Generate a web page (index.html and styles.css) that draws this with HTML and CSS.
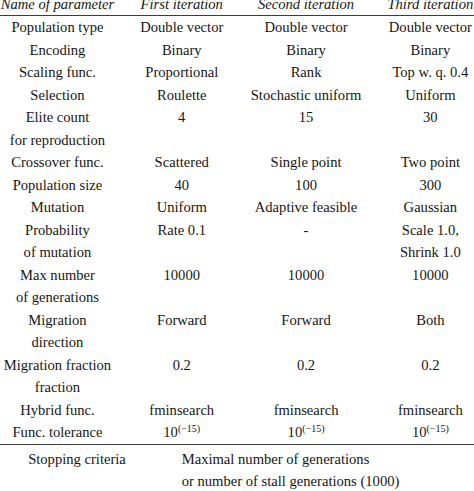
FILE: index.html
```html
<!DOCTYPE html>
<html>
<head>
<meta charset="utf-8">
<link rel="stylesheet" href="styles.css">
</head>
<body>
<div class="sheet">
  <table class="params">
    <colgroup>
      <col class="c"><col class="c"><col class="c"><col class="c">
    </colgroup>
    <thead>
      <tr>
        <th>Name of parameter</th>
        <th>First iteration</th>
        <th>Second iteration</th>
        <th>Third iteration</th>
      </tr>
    </thead>
    <tbody>
      <tr><td>Population type</td><td>Double vector</td><td>Double vector</td><td>Double vector</td></tr>
      <tr><td>Encoding</td><td>Binary</td><td>Binary</td><td>Binary</td></tr>
      <tr><td>Scaling func.</td><td>Proportional</td><td>Rank</td><td>Top w. q. 0.4</td></tr>
      <tr><td>Selection</td><td>Roulette</td><td>Stochastic uniform</td><td>Uniform</td></tr>
      <tr><td>Elite count<br>for reproduction</td><td>4</td><td>15</td><td>30</td></tr>
      <tr><td>Crossover func.</td><td>Scattered</td><td>Single point</td><td>Two point</td></tr>
      <tr><td>Population size</td><td>40</td><td>100</td><td>300</td></tr>
      <tr><td>Mutation</td><td>Uniform</td><td>Adaptive feasible</td><td>Gaussian</td></tr>
      <tr><td>Probability<br>of mutation</td><td>Rate 0.1</td><td>-</td><td>Scale 1.0,<br>Shrink 1.0</td></tr>
      <tr><td>Max number<br>of generations</td><td>10000</td><td>10000</td><td>10000</td></tr>
      <tr><td>Migration<br>direction</td><td>Forward</td><td>Forward</td><td>Both</td></tr>
      <tr><td>Migration fraction<br>fraction</td><td>0.2</td><td>0.2</td><td>0.2</td></tr>
      <tr><td>Hybrid func.</td><td>fminsearch</td><td>fminsearch</td><td>fminsearch</td></tr>
      <tr class="last"><td>Func. tolerance</td><td>10<sup>(−15)</sup></td><td>10<sup>(−15)</sup></td><td>10<sup>(−15)</sup></td></tr>
    </tbody>
  </table>
  <div class="stop">
    <div class="stop-label">Stopping criteria</div>
    <div class="stop-value">Maximal number of generations<br>or number of stall generations (1000)</div>
  </div>
</div>
</body>
</html>
```

FILE: styles.css
```css
html, body {
  margin: 0;
  padding: 0;
  overflow: hidden;
  background: #ffffff;
}

.sheet {
  margin-left: -4.7px;
  margin-top: -6px;
  width: 497.2px;
  font-family: "Liberation Serif", "Times New Roman", serif;
  font-size: 14.6px;
  color: #161616;
}

.params {
  border-collapse: collapse;
  table-layout: fixed;
  width: 497.2px;
}

.params .c {
  width: 124.3px;
}

.params th {
  font-style: italic;
  font-weight: normal;
  line-height: 21px;
  padding: 0;
  text-align: center;
  white-space: nowrap;
  border-bottom: 1.5px solid #3c3c3c;
}

.params td {
  padding: 0;
  line-height: 22.5px;
  text-align: center;
  vertical-align: top;
  white-space: nowrap;
}

.params tr.last td {
  border-bottom: 1.5px solid #3c3c3c;
}

.params sup {
  font-size: 10px;
  line-height: 0;
  vertical-align: 5.5px;
}

.stop {
  display: flex;
  padding-top: 3px;
  line-height: 22.5px;
}

.stop-label {
  width: 163.4px;
  text-align: center;
  white-space: nowrap;
}

.stop-value {
  padding-left: 23px;
  white-space: nowrap;
}
```
